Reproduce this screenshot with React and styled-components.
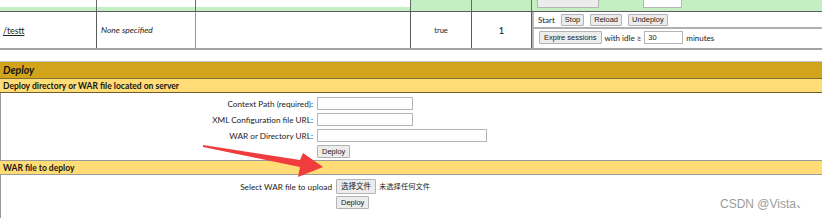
import React from "react";
import styled, { createGlobalStyle } from "styled-components";

const GlobalStyle = createGlobalStyle`
  html, body {
    margin: 0;
    padding: 0;
    background: #ffffff;
  }
  body {
    font-family: Lato, "Noto Sans", "Noto Sans CJK SC", sans-serif;
    color: #222222;
  }
`;

const COLS = "97px 99px 215px 61px 60px 1fr";

const Page = styled.div`
  position: relative;
  width: 822px;
  height: 218px;
  overflow: hidden;
  background: #ffffff;
`;

/* ---------- applications table ---------- */

const PrevRow = styled.div`
  display: grid;
  grid-template-columns: ${COLS};
  height: 11px;
`;

const PrevCell = styled.div`
  border-right: 1px solid #6a6a6a;
  background: ${(p) =>
    p.$full ? "#c3efc3" : "linear-gradient(#ffffff 0 7px, #c3efc3 7px)"};
  display: flex;
  align-items: flex-end;
  &:last-child {
    border-right: none;
  }
`;

const GhostBox = styled.div`
  height: 8px;
  width: ${(p) => p.$w}px;
  margin-left: ${(p) => p.$ml}px;
  margin-bottom: 3px;
  box-sizing: border-box;
  border: 1px solid #b5b5b5;
  border-top: none;
  background: ${(p) => (p.$input ? "#ffffff" : "#ececec")};
`;

const AppRow = styled.div`
  display: grid;
  grid-template-columns: ${COLS};
  height: 36px;
  border-top: 1px solid #5c5c5c;
  border-bottom: 2px solid #a3a3a3;
  box-sizing: content-box;
`;

const Cell = styled.div`
  border-right: 1px solid ${(p) => p.$line || "#5c5c5c"};
  display: flex;
  align-items: center;
  justify-content: ${(p) => (p.$center ? "center" : "flex-start")};
  padding-left: ${(p) => p.$pl || 0}px;
  font-size: ${(p) => p.$fs || 8.5}px;
  font-style: ${(p) => (p.$italic ? "italic" : "normal")};
  &:last-child {
    border-right: none;
  }
`;

const PathLink = styled.a`
  color: #222222;
  text-decoration: underline;
`;

const Commands = styled.div`
  border-left: 2px solid #b8b8b8;
  display: grid;
  grid-template-rows: 17px 17px;
`;

const CmdLine = styled.div`
  display: flex;
  align-items: center;
  padding-left: 4px;
  font-size: 8px;
  border-bottom: ${(p) => (p.$sep ? "2px solid #b0b0b0" : "none")};
`;

const Btn = styled.button`
  font-family: "Liberation Sans", Arial, "Noto Sans CJK SC", sans-serif;
  font-size: 7.5px;
  color: #222222;
  background: #ececec;
  border: 1px solid #b3b3b3;
  border-radius: 1px;
  height: ${(p) => p.$h || 12}px;
  padding: 0 ${(p) => p.$px ?? 4}px;
  margin: 0 ${(p) => p.$mr || 0}px 0 ${(p) => p.$ml || 0}px;
  line-height: 1;
`;

const Label = styled.span`
  margin: 0 ${(p) => p.$mr || 0}px 0 ${(p) => p.$ml || 0}px;
  white-space: nowrap;
`;

const SmallInput = styled.input`
  box-sizing: border-box;
  width: ${(p) => p.$w}px;
  height: ${(p) => p.$h || 13}px;
  border: 1px solid #b5b5b5;
  font-family: "Liberation Sans", Arial, sans-serif;
  font-size: 7.5px;
  padding: 0 3px;
  margin: 0;
  color: #222222;
  outline: none;
`;

const Spacer = styled.div`
  height: 11px;
`;

/* ---------- deploy table ---------- */

const Deploy = styled.div`
  border-top: 1px solid #c4c4c4;
`;

const Title = styled.div`
  height: 16px;
  background: #d2a41c;
  border-bottom: 1px solid #80702f;
  font-size: 10.5px;
  font-weight: 700;
  font-style: italic;
  display: flex;
  align-items: center;
  padding-left: 3px;
  color: #151515;
`;

const SubHead = styled.div`
  height: 13px;
  background: #ffdc75;
  border-top: ${(p) => p.$top || "none"};
  border-bottom: 1px solid ${(p) => p.$line || "#6b5d2e"};
  font-size: 8.5px;
  font-weight: 700;
  display: flex;
  align-items: center;
  padding-left: 3px;
  color: #151515;
`;

const Body = styled.div`
  border-left: 1px solid #9a9a9a;
  height: ${(p) => p.$h}px;
  box-sizing: border-box;
  padding-top: ${(p) => p.$pt}px;
`;

const Form = styled.div`
  display: grid;
  grid-template-columns: ${(p) => p.$labelW}px auto;
  column-gap: 4px;
  row-gap: ${(p) => p.$gap}px;
  justify-items: start;
  align-items: center;
  font-size: 8.2px;
`;

const FormLabel = styled.div`
  justify-self: end;
  white-space: nowrap;
`;

const NoFile = styled.span`
  font-family: "Noto Sans CJK SC", sans-serif;
  font-size: 7.3px;
  margin-left: 3px;
`;

/* ---------- overlays ---------- */

const Overlay = styled.svg`
  position: absolute;
  left: 0;
  top: 0;
  pointer-events: none;
`;

const Watermark = styled.div`
  position: absolute;
  right: 14px;
  bottom: 7px;
  font-family: "Liberation Sans", Arial, "Noto Sans CJK SC", sans-serif;
  font-size: 12px;
  color: #9c9c9c;
`;

const App = () => {
  return (
    <Page>
      <GlobalStyle />

      <PrevRow>
        <PrevCell />
        <PrevCell />
        <PrevCell />
        <PrevCell $full />
        <PrevCell $full />
        <PrevCell $full>
          <GhostBox $w={62} $ml={5} />
          <GhostBox $w={39} $ml={44} $input />
        </PrevCell>
      </PrevRow>

      <AppRow>
        <Cell $pl={3} $fs={8.8}>
          <PathLink href="#">/testt</PathLink>
        </Cell>
        <Cell $pl={4} $italic $line="#9a9a9a">
          None specified
        </Cell>
        <Cell />
        <Cell $center $fs={7.5}>
          true
        </Cell>
        <Cell $center $fs={10}>
          1
        </Cell>
        <Commands>
          <CmdLine $sep>
            <Label $mr={6}>Start</Label>
            <Btn $mr={6} $px={3}>Stop</Btn>
            <Btn $mr={6} $px={3}>Reload</Btn>
            <Btn $px={3}>Undeploy</Btn>
          </CmdLine>
          <CmdLine>
            <Btn $ml={1} $h={13}>Expire sessions</Btn>
            <Label $ml={3} $mr={3}>with idle ≥</Label>
            <SmallInput $w={39} defaultValue="30" />
            <Label $ml={3}>minutes</Label>
          </CmdLine>
        </Commands>
      </AppRow>

      <Spacer />

      <Deploy>
        <Title>Deploy</Title>
        <SubHead>Deploy directory or WAR file located on server</SubHead>
        <Body $h={67} $pt={4}>
          <Form $labelW={312} $gap={3}>
            <FormLabel>Context Path (required):</FormLabel>
            <SmallInput $w={96} />
            <FormLabel>XML Configuration file URL:</FormLabel>
            <SmallInput $w={96} />
            <FormLabel>WAR or Directory URL:</FormLabel>
            <SmallInput $w={170} />
            <div />
            <Btn $h={13}>Deploy</Btn>
          </Form>
        </Body>
        <SubHead $top="1px solid #9a9a9a" $line="#9a9a9a">
          WAR file to deploy
        </SubHead>
        <Body $h={50} $pt={4}>
          <Form $labelW={331} $gap={2}>
            <FormLabel>Select WAR file to upload</FormLabel>
            <div>
              <Btn $h={15}>选择文件</Btn>
              <NoFile>未选择任何文件</NoFile>
            </div>
            <div />
            <Btn $h={13}>Deploy</Btn>
          </Form>
        </Body>
      </Deploy>

      <Overlay width="822" height="218" viewBox="0 0 822 218">
        <polygon
          points="203,145 300,160 303,153 323,167 298,177 300,167 203,147"
          fill="#f03c3c"
        />
      </Overlay>

      <Watermark>CSDN @Vista、</Watermark>
    </Page>
  );
};

export default App;
